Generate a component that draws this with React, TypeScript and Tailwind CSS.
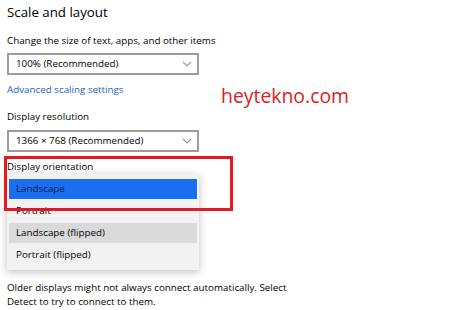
const Chevron = () => (
  <svg width="10" height="6" viewBox="0 0 10 6" className="shrink-0">
    <path d="M1 1l4 4 4-4" fill="none" stroke="#9a9a9a" strokeWidth="1.1" />
  </svg>
);

function Select({ value }: { value: string }) {
  return (
    <div className="flex h-[22px] w-[192px] items-center justify-between border-2 border-[#9c9c9c] bg-white pl-[7px] pr-[5px] text-[9.8px] text-black">
      <span>{value}</span>
      <Chevron />
    </div>
  );
}

const options = ["Landscape", "Portrait", "Landscape (flipped)", "Portrait (flipped)"];

export default function App() {
  return (
    <main
      className="relative h-[310px] w-[474px] overflow-hidden bg-white pl-[7px] text-black"
      style={{ fontFamily: '"Open Sans", "Noto Sans", sans-serif' }}
    >
      <h1 className="pt-[2px] text-[13.3px] leading-[20px] font-normal">Scale and layout</h1>

      <p className="mt-[11px] text-[9.8px] leading-[16px]">Change the size of text, apps, and other items</p>
      <div className="mt-[4px]">
        <Select value="100% (Recommended)" />
      </div>

      <p className="mt-[7px] text-[9.8px] leading-[16px] text-[#1f5fbf]">Advanced scaling settings</p>

      <p className="mt-[11px] text-[9.8px] leading-[16px]">Display resolution</p>
      <div className="mt-[5px]">
        <Select value="1366 × 768 (Recommended)" />
      </div>

      <p className="mt-[8px] text-[9.8px] leading-[14px]">Display orientation</p>

      {/* open dropdown list */}
      <div className="w-[192px] bg-[#f2f2f2] py-[5px] px-[2px] shadow-[0_2px_8px_rgba(0,0,0,0.25)]">
        {options.map((o, i) => (
          <div
            key={o}
            className={
              "flex h-[20px] items-center pl-[7px] text-[9.8px] " +
              (i === 0 ? "bg-[#1a6ff0] text-[#0d1d4a] " : "") +
              (i === 2 ? "bg-[#dadada] " : "") +
              (i > 0 ? "mt-[2px]" : "")
            }
          >
            {o}
          </div>
        ))}
      </div>

      <p className="mt-[11px] w-[292px] text-[9.8px] leading-[14px]">
        Older displays might not always connect automatically. Select Detect to try to connect to them.
      </p>

      {/* annotation box */}
      <div className="absolute left-[4px] top-[156px] h-[55px] w-[229px] border-[3px] border-[#e01b24]" />

      {/* watermark */}
      <div
        className="absolute left-[221px] top-[81px] text-[19.4px] text-[#e01b24]"
        style={{ fontFamily: '"Open Sans", sans-serif' }}
      >
        heytekno.com
      </div>
    </main>
  );
}
